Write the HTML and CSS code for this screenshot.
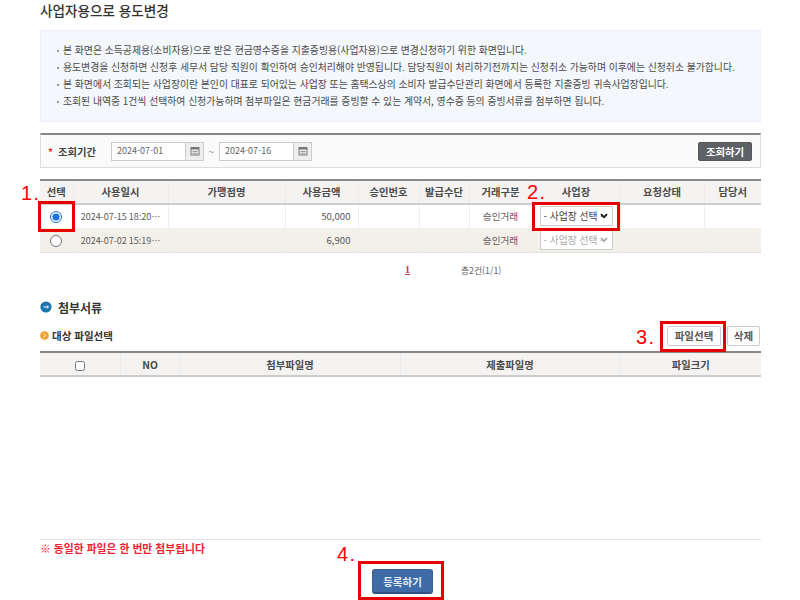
FILE: index.html
```html
<!DOCTYPE html>
<html lang="ko">
<head>
<meta charset="utf-8">
<title>사업자용으로 용도변경</title>
<link rel="stylesheet" href="styles.css">
</head>
<body>
<main class="page">
  <h1 class="title">사업자용으로 용도변경</h1>
  <ul class="info">
    <li>본 화면은 소득공제용(소비자용)으로 받은 현금영수증을 지출증빙용(사업자용)으로 변경신청하기 위한 화면입니다.</li>
    <li>용도변경을 신청하면 신청후 세무서 담당 직원이 확인하여 승인처리해야 반영됩니다. 담당직원이 처리하기전까지는 신청취소 가능하며 이후에는 신청취소 불가합니다.</li>
    <li>본 화면에서 조회되는 사업장이란 본인이 대표로 되어있는 사업장 또는 홈택스상의 소비자 발급수단관리 화면에서 등록한 지출증빙 귀속사업장입니다.</li>
    <li>조회된 내역중 1건씩 선택하여 신청가능하며 첨부파일은 현금거래를 증빙할 수 있는 계약서, 영수증 등의 증빙서류를 첨부하면 됩니다.</li>
  </ul>
  <section class="search">
    <span class="star">*</span><span class="search-label">조회기간</span>
    <span class="date"><span class="date-value">2024-07-01</span><span class="cal"><svg viewBox="0 0 10 10" width="10" height="10"><rect x="1" y="1.5" width="8" height="7.5" fill="none" stroke="#777"/><rect x="1" y="1.5" width="8" height="2" fill="#777"/><path d="M2.5 5.5h5M2.5 7.3h5" stroke="#999"/></svg></span></span>
    <span class="tilde">~</span>
    <span class="date"><span class="date-value">2024-07-16</span><span class="cal"><svg viewBox="0 0 10 10" width="10" height="10"><rect x="1" y="1.5" width="8" height="7.5" fill="none" stroke="#777"/><rect x="1" y="1.5" width="8" height="2" fill="#777"/><path d="M2.5 5.5h5M2.5 7.3h5" stroke="#999"/></svg></span></span>
    <button class="btn-dark" type="button">조회하기</button>
  </section>
  <table class="grid list">
    <colgroup><col class="c1"><col class="c2"><col class="c3"><col class="c4"><col class="c5"><col class="c6"><col class="c7"><col class="c8"><col class="c9"><col class="c10"></colgroup>
    <thead><tr><th>선택</th><th>사용일시</th><th>가맹점명</th><th>사용금액</th><th>승인번호</th><th>발급수단</th><th>거래구분</th><th>사업장</th><th>요청상태</th><th>담당서</th></tr></thead>
    <tbody>
      <tr><td class="ctr"><input type="radio" name="r" class="radio" checked></td><td class="ctr when">2024-07-15 18:20⋯</td><td></td><td class="num">50,000</td><td></td><td></td><td class="ctr">승인거래</td><td class="ctr"><select class="sel"><option>- 사업장 선택 -</option></select></td><td></td><td></td></tr>
      <tr class="alt"><td class="ctr"><input type="radio" name="r" class="radio"></td><td class="ctr when">2024-07-02 15:19⋯</td><td></td><td class="num">6,900</td><td></td><td></td><td class="ctr">승인거래</td><td class="ctr"><select class="sel" disabled><option>- 사업장 선택 -</option></select></td><td></td><td></td></tr>
    </tbody>
  </table>
  <div class="pager"><a class="page-no">1</a><span class="total">총2건(1/1)</span></div>
  <h2 class="sub"><svg class="sub-ico" viewBox="0 0 12 12" width="12" height="12"><circle cx="6" cy="6" r="5.6" fill="#1b75b0"/><path d="M3.5 6h5M6.8 4.6 8.4 6 6.8 7.4" stroke="#fff" fill="none"/></svg>첨부서류</h2>
  <div class="file-head">
    <h3 class="sub2"><svg viewBox="0 0 9 9" width="9" height="9"><circle cx="4.5" cy="4.5" r="4.3" fill="#f0a030"/><path d="M3.5 2.5 5.6 4.5 3.5 6.5" stroke="#fff" fill="none"/></svg>대상 파일선택</h3>
    <div class="file-btns"><button class="btn-light pick" type="button">파일선택</button><button class="btn-light del" type="button">삭제</button></div>
  </div>
  <table class="grid files">
    <colgroup><col class="f1"><col class="f2"><col class="f3"><col class="f4"><col class="f5"></colgroup>
    <thead><tr><th><input type="checkbox" class="check"></th><th>NO</th><th>첨부파일명</th><th>제출파일명</th><th>파일크기</th></tr></thead>
  </table>
  <div class="notice">※ 동일한 파일은 한 번만 첨부됩니다</div>
  <div class="submit"><button class="btn-blue" type="button">등록하기</button></div>
</main>
<span class="mark n1">1.</span><span class="box b1"></span>
<span class="mark n2">2.</span><span class="box b2"></span>
<span class="mark n3">3.</span><span class="box b3"></span>
<span class="mark n4">4.</span><span class="box b4"></span>
</body>
</html>
```
FILE: styles.css
```css
* { box-sizing: border-box; }
html, body { margin: 0; padding: 0; height: 600px; overflow: hidden; background: #fff; }
body { position: relative; font-family: "Noto Sans CJK KR", "Liberation Sans", sans-serif; font-size: 9px; color: #555; }
.page { width: 721px; margin-left: 40px; }
.title { margin: 0; height: 30px; font-size: 13.6px; line-height: 20px; font-weight: 500; color: #333; }
.info { margin: 0; height: 92px; padding: 10.6px 14px 0 16px; list-style: none; background: #f4f7fb; border: 1px solid #edf1f7; }
.info li { height: 17.3px; line-height: 17.3px; font-size: 9.85px; color: #4a4a4a; white-space: nowrap; padding-left: 6px; position: relative; }
.info li::before { content: ""; position: absolute; left: 0; top: 8px; width: 2px; height: 2px; background: #999; }
.search { margin-top: 11px; height: 35px; display: flex; align-items: center; background: #fafafa; border: 1px solid #ddd; border-top: 2px solid #888; padding: 0 8px 0 7px; }
.star { color: #d33; font-weight: 700; width: 10px; font-size: 10px; }
.search-label { width: 53px; font-size: 10.3px; font-weight: 700; color: #444; }
.date { display: flex; height: 19px; width: 93px; }
.date-value { width: 75px; padding-left: 5px; background: #fff; border: 1px solid #ccc; line-height: 15px; font-size: 9px; color: #666; }
.cal { width: 18px; display: flex; align-items: center; justify-content: center; background: #eee; border: 1px solid #ccc; border-left: 0; }
.tilde { width: 15px; text-align: center; }
.btn-dark { margin-left: auto; width: 54px; height: 19px; padding: 0; background: #5e6166; border: 1px solid #54565a; border-radius: 2px; color: #fff; font: 700 10.4px "Noto Sans CJK KR", sans-serif; }
.grid { width: 721px; border-collapse: collapse; table-layout: fixed; }
.grid th { height: 23.5px; padding: 0; background: #f4f3f1; border-right: 1px solid #ececec; font-weight: 700; font-size: 10.3px; color: #4a4a4a; text-align: center; }
.grid th:last-child, .grid td:last-child { border-right: 0; }
.grid thead { border-top: 2px solid #888; border-bottom: 2px solid #ccc; }
.grid td { height: 24.5px; padding: 0 7px; border-right: 1px solid #eee; font-size: 9.6px; color: #5a5a5a; white-space: nowrap; overflow: hidden; }
.grid td:has(.sel) { padding: 0; }
.grid .when { font-size: 9px; }
.alt td { background: #f3efe9; }
.list { margin-top: 11px; border-bottom: 1px solid #e0e0e0; }
.ctr { text-align: center; }
.num { text-align: right; }
.c1 { width: 33px; } .c2 { width: 95px; } .c3 { width: 117px; } .c4 { width: 73px; } .c5 { width: 61px; }
.c6 { width: 50px; } .c7 { width: 63px; } .c8 { width: 88px; } .c9 { width: 84px; } .c10 { width: 57px; }
.radio { margin: 0; width: 12px; height: 12px; vertical-align: middle; accent-color: #1a73e8; }
.sel { appearance: none; width: 73px; height: 20px; padding: 0 0 0 3px; font-size: 9.8px; font-family: inherit; color: #444; border: 1px solid #ccc; border-radius: 0; vertical-align: middle; background: #fff url("data:image/svg+xml,%3Csvg xmlns='http://www.w3.org/2000/svg' width='8' height='6'%3E%3Cpath d='M1 1.2 4 4.2 7 1.2' fill='none' stroke='%23111' stroke-width='1.8'/%3E%3C/svg%3E") no-repeat right 4px center; }
.sel:disabled { color: #aaa; opacity: 1; background-image: url("data:image/svg+xml,%3Csvg xmlns='http://www.w3.org/2000/svg' width='8' height='6'%3E%3Cpath d='M1 1.2 4 4.2 7 1.2' fill='none' stroke='%23aaa' stroke-width='1.8'/%3E%3C/svg%3E"); }
.pager { height: 41px; display: flex; padding-top: 11px; }
.page-no { margin-left: 365px; font: 700 10px "Liberation Serif", serif; color: #c33; text-decoration: underline; }
.total { margin-left: 51px; font-size: 8.8px; color: #666; }
.sub { margin: 5px 0 0; height: 16px; display: flex; align-items: center; gap: 6px; font-size: 12px; font-weight: 700; color: #333; }
.sub-ico { flex: none; }
.file-head { margin-top: 5px; height: 31px; display: flex; align-items: center; justify-content: space-between; }
.sub2 { margin: 0; display: flex; align-items: center; gap: 3px; font-size: 10.5px; font-weight: 700; color: #333; }
.file-btns { display: flex; gap: 6px; margin-right: 1px; }
.btn-light { height: 20px; padding: 0; background: #fff; border: 1px solid #ccc; border-radius: 2px; font: 700 10.5px "Noto Sans CJK KR", sans-serif; color: #555; }
.pick { width: 54px; } .del { width: 33px; }
.files th { height: 24px; }
.f1 { width: 80px; } .f2 { width: 60px; } .f3 { width: 220px; } .f4 { width: 220px; } .f5 { width: 141px; }
.check { margin: 0; width: 10px; height: 10px; vertical-align: middle; }
.notice { margin-top: 162px; height: 30px; border-top: 1px solid #e4e4e4; padding-top: 1px; font-size: 10.8px; font-weight: 700; color: #ee2233; line-height: 14px; }
.submit { display: flex; justify-content: center; margin-left: 4px; }
.btn-blue { width: 61px; height: 25px; padding: 0; background: #3f6ca6; border: 1px solid #386196; border-bottom: 2px solid #2e5282; border-radius: 3px; color: #e8eef6; font: 700 10.5px "Noto Sans CJK KR", sans-serif; }
.mark { position: absolute; color: #f00; font: 20px/22px "Liberation Sans", sans-serif; letter-spacing: 1.5px; }
.n1 { left: 21px; top: 182px; }
.n2 { left: 527px; top: 181px; }
.n3 { left: 636px; top: 326px; }
.n4 { left: 337px; top: 543px; }
.box { position: absolute; border: 3px solid #e60000; }
.b1 { left: 38px; top: 201px; width: 37px; height: 31px; }
.b2 { left: 532px; top: 202px; width: 88px; height: 29px; }
.b3 { left: 660px; top: 321px; width: 66px; height: 31px; }
.b4 { left: 358px; top: 561px; width: 86px; height: 39px; }
```
